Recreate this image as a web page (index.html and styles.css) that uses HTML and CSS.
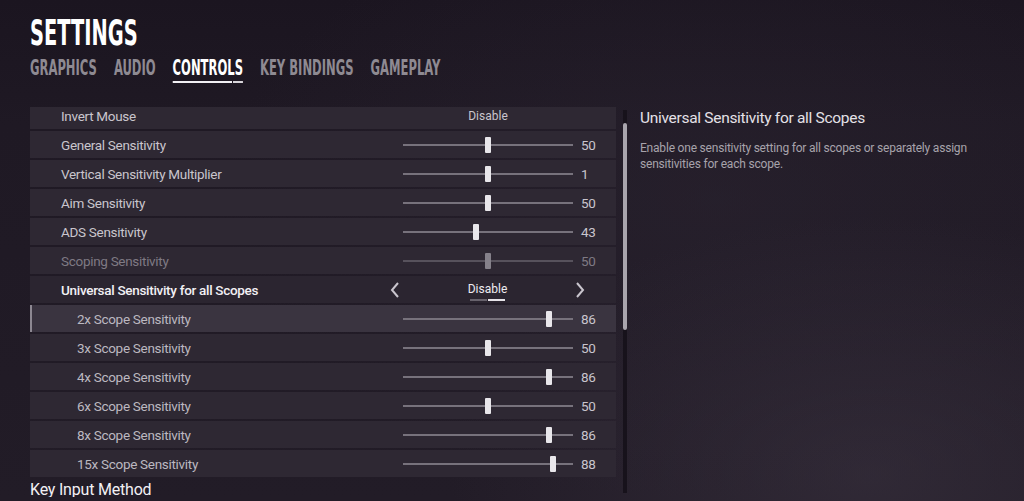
FILE: index.html
```html
<!DOCTYPE html>
<html lang="en">
<head>
<meta charset="utf-8">
<title>Settings</title>
<link rel="stylesheet" href="styles.css">
</head>
<body>
<div class="page">
  <header class="head">
    <h1 class="title">SETTINGS</h1>
    <nav class="tabs">
      <span class="tab">GRAPHICS</span>
      <span class="tab">AUDIO</span>
      <span class="tab active">CONTROLS</span>
      <span class="tab">KEY BINDINGS</span>
      <span class="tab">GAMEPLAY</span>
    </nav>
  </header>

  <main class="main">
    <section class="list-clip">
      <div class="list">
        <div class="row">
          <span class="label">Invert Mouse</span>
          <span class="choice">Disable</span>
        </div>
        <div class="row">
          <span class="label">General Sensitivity</span>
          <div class="slider"><div class="track"><span class="knob" style="left:50%"></span></div></div>
          <span class="value">50</span>
        </div>
        <div class="row">
          <span class="label">Vertical Sensitivity Multiplier</span>
          <div class="slider"><div class="track"><span class="knob" style="left:50%"></span></div></div>
          <span class="value">1</span>
        </div>
        <div class="row">
          <span class="label">Aim Sensitivity</span>
          <div class="slider"><div class="track"><span class="knob" style="left:50%"></span></div></div>
          <span class="value">50</span>
        </div>
        <div class="row">
          <span class="label">ADS Sensitivity</span>
          <div class="slider"><div class="track"><span class="knob" style="left:43%"></span></div></div>
          <span class="value">43</span>
        </div>
        <div class="row disabled">
          <span class="label">Scoping Sensitivity</span>
          <div class="slider"><div class="track"><span class="knob" style="left:50%"></span></div></div>
          <span class="value">50</span>
        </div>
        <div class="row focus">
          <span class="label">Universal Sensitivity for all Scopes</span>
          <div class="selector">
            <svg class="arrow" width="10" height="16" viewBox="0 0 10 16"><polyline points="8,1 2,8 8,15" fill="none" stroke="#c9c5cd" stroke-width="2"/></svg>
            <span class="sel-text">Disable
              <span class="sel-marks"><i class="mark off"></i><i class="mark on"></i></span>
            </span>
            <svg class="arrow" width="10" height="16" viewBox="0 0 10 16"><polyline points="2,1 8,8 2,15" fill="none" stroke="#c9c5cd" stroke-width="2"/></svg>
          </div>
        </div>
        <div class="row sub hover">
          <span class="label">2x Scope Sensitivity</span>
          <div class="slider"><div class="track"><span class="knob" style="left:86%"></span></div></div>
          <span class="value">86</span>
        </div>
        <div class="row sub">
          <span class="label">3x Scope Sensitivity</span>
          <div class="slider"><div class="track"><span class="knob" style="left:50%"></span></div></div>
          <span class="value">50</span>
        </div>
        <div class="row sub">
          <span class="label">4x Scope Sensitivity</span>
          <div class="slider"><div class="track"><span class="knob" style="left:86%"></span></div></div>
          <span class="value">86</span>
        </div>
        <div class="row sub">
          <span class="label">6x Scope Sensitivity</span>
          <div class="slider"><div class="track"><span class="knob" style="left:50%"></span></div></div>
          <span class="value">50</span>
        </div>
        <div class="row sub">
          <span class="label">8x Scope Sensitivity</span>
          <div class="slider"><div class="track"><span class="knob" style="left:86%"></span></div></div>
          <span class="value">86</span>
        </div>
        <div class="row sub">
          <span class="label">15x Scope Sensitivity</span>
          <div class="slider"><div class="track"><span class="knob" style="left:88%"></span></div></div>
          <span class="value">88</span>
        </div>
        <h2 class="group">Key Input Method</h2>
      </div>
    </section>

    <div class="scrollbar"><div class="thumb"></div></div>

    <aside class="info">
      <h3 class="info-title">Universal Sensitivity for all Scopes</h3>
      <p class="info-text">Enable one sensitivity setting for all scopes or separately assign sensitivities for each scope.</p>
    </aside>
  </main>
</div>
</body>
</html>
```

FILE: styles.css
```css
* { box-sizing: border-box; }

html, body {
  margin: 0;
  height: 100%;
}

body {
  overflow: hidden;
  background:
    radial-gradient(ellipse 420px 260px at 85% 95%, rgba(60, 52, 66, 0.55), rgba(60, 52, 66, 0) 100%),
    radial-gradient(ellipse 500px 300px at 70% 40%, rgba(44, 37, 50, 0.5), rgba(44, 37, 50, 0) 100%),
    linear-gradient(180deg, #1b1520 0%, #1f1924 25%, #221c27 100%);
  font-family: Roboto, "Liberation Sans", sans-serif;
  color: #c9c5cd;
}

.page {
  padding: 13px 0 0 30px;
}

/* ---------- header ---------- */
.head {
  height: 70px;
}

.title {
  margin: 0;
  font-family: "DejaVu Sans Condensed", "DejaVu Sans", sans-serif;
  font-stretch: condensed;
  font-weight: bold;
  font-size: 36px;
  line-height: 40px;
  color: #ffffff;
  transform: scaleX(0.6);
  transform-origin: left center;
  white-space: nowrap;
  width: 300px;
}

.tabs {
  margin-top: 2px;
  display: flex;
  align-items: flex-start;
  gap: 29px;
  font-family: "DejaVu Sans Condensed", "DejaVu Sans", sans-serif;
  font-stretch: condensed;
  font-weight: bold;
  font-size: 22px;
  line-height: 26px;
  color: #8e8a92;
  transform: scaleX(0.585);
  transform-origin: left center;
  width: 900px;
  white-space: nowrap;
}

.tab {
  display: flex;
  flex-direction: column;
}

.tab.active {
  color: #ffffff;
}

.tab.active::after {
  content: "";
  height: 2px;
  background: linear-gradient(90deg, #f2f0f4 0%, #f2f0f4 84%, transparent 84%, transparent 86%, #d8d5da 86%, #d8d5da 100%);
}

/* ---------- main ---------- */
.main {
  margin-top: 24px;
  display: flex;
  align-items: flex-start;
}

.list-clip {
  width: 586px;
  height: 390px;
  overflow: hidden;
  flex: none;
}

.list {
  margin-top: -5px;
  display: flex;
  flex-direction: column;
  gap: 2px;
}

.row {
  height: 27px;
  display: grid;
  grid-template-columns: 1fr 170px 35px;
  column-gap: 8px;
  align-items: center;
  padding-left: 31px;
  background: #2e2833;
  font-size: 13.5px;
  letter-spacing: -0.3px;
  color: #c9c5cd;
}

.row.sub {
  padding-left: 47px;
  color: #bcb8c0;
}

.row.focus {
  background: #2b2530;
  color: #f2f0f4;
  font-weight: 500;
}

.row.hover {
  background: #3a3440;
  box-shadow: inset 2px 0 0 #8d8892;
}

.row.disabled {
  color: #7f7a84;
}

.label {
  white-space: nowrap;
}

.choice {
  grid-column: 2;
  text-align: center;
  font-size: 12px;
  letter-spacing: 0;
  color: #c9c5cd;
}

.slider {
  grid-column: 2;
  height: 16px;
  display: flex;
  align-items: center;
}

.track {
  position: relative;
  width: 100%;
  height: 2px;
  background: #77727c;
}

.knob {
  position: absolute;
  top: -7px;
  width: 6px;
  height: 16px;
  margin-left: -3px;
  border-radius: 1px;
  background: #e9e7eb;
}

.row.disabled .track { background: #57525c; }
.row.disabled .knob { background: #85818a; }

.value {
  grid-column: 3;
  color: #c9c5cd;
}

.row.disabled .value { color: #7f7a84; }

.selector {
  grid-column: 2 / 4;
  margin: 0 26px 0 -18px;
  display: flex;
  align-items: center;
  justify-content: space-between;
  padding: 0 5px;
  font-size: 12px;
  font-weight: 400;
  letter-spacing: 0;
}

.arrow {
  display: block;
}

.sel-text {
  display: flex;
  flex-direction: column;
  align-items: center;
  color: #eeecf0;
  line-height: 15px;
  padding-top: 4px;
}

.sel-marks {
  display: flex;
  gap: 1px;
  margin-top: 2px;
}

.mark {
  display: block;
  width: 17px;
  height: 1.5px;
}

.mark.off { background: #67626c; }
.mark.on { background: #e6e3e8; }

.group {
  margin: 1px 0 0;
  font-size: 16px;
  font-weight: 400;
  line-height: 20px;
  color: #f2f0f4;
  letter-spacing: -0.2px;
}

/* ---------- scrollbar ---------- */
.scrollbar {
  flex: none;
  margin: 3px 0 0 7px;
  width: 4px;
  height: 383px;
  background: #17121b;
  padding-top: 13px;
}

.thumb {
  height: 207px;
  border-radius: 2px;
  background: #a9a5ad;
}

/* ---------- info ---------- */
.info {
  margin-left: 13px;
  width: 360px;
}

.info-title {
  margin: 1px 0 0;
  font-size: 15.5px;
  font-weight: 400;
  line-height: 20px;
  letter-spacing: -0.3px;
  color: #e4e1e7;
}

.info-text {
  margin: 12px 0 0;
  font-size: 12px;
  line-height: 16px;
  letter-spacing: -0.2px;
  color: #a7a3ab;
}
```
